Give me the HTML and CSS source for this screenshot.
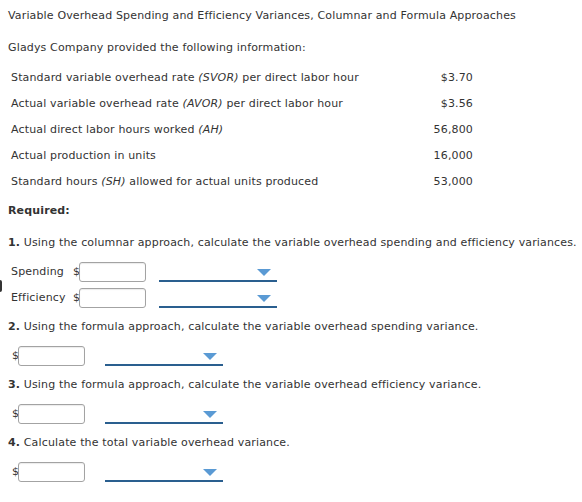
FILE: index.html
```html
<!DOCTYPE html>
<html>
<head>
<meta charset="utf-8">
<link rel="stylesheet" href="styles.css">
</head>
<body>
<div class="page">
  <div class="edge-mark"></div>
  <p class="title">Variable Overhead Spending and Efficiency Variances, Columnar and Formula Approaches</p>
  <p class="intro">Gladys Company provided the following information:</p>
  <div class="data">
    <div class="row"><span class="label">Standard variable overhead rate <i>(SVOR)</i> per direct labor hour</span><span class="val">$3.70</span></div>
    <div class="row"><span class="label">Actual variable overhead rate <i>(AVOR)</i> per direct labor hour</span><span class="val">$3.56</span></div>
    <div class="row"><span class="label">Actual direct labor hours worked <i>(AH)</i></span><span class="val">56,800</span></div>
    <div class="row"><span class="label">Actual production in units</span><span class="val">16,000</span></div>
    <div class="row"><span class="label">Standard hours <i>(SH)</i> allowed for actual units produced</span><span class="val">53,000</span></div>
  </div>
  <p class="required">Required:</p>
  <p class="q q1"><b>1.</b> Using the columnar approach, calculate the variable overhead spending and efficiency variances.</p>
  <div class="named">
    <div class="answer"><span class="name">Spending</span><span class="dollar">$</span><span class="box"></span><span class="select"><span class="arrow"></span></span></div>
    <div class="answer"><span class="name">Efficiency</span><span class="dollar">$</span><span class="box"></span><span class="select"><span class="arrow"></span></span></div>
  </div>
  <p class="q"><b>2.</b> Using the formula approach, calculate the variable overhead spending variance.</p>
  <div class="answer plain"><span class="dollar">$</span><span class="box"></span><span class="select"><span class="arrow"></span></span></div>
  <p class="q"><b>3.</b> Using the formula approach, calculate the variable overhead efficiency variance.</p>
  <div class="answer plain"><span class="dollar">$</span><span class="box"></span><span class="select"><span class="arrow"></span></span></div>
  <p class="q"><b>4.</b> Calculate the total variable overhead variance.</p>
  <div class="answer plain"><span class="dollar">$</span><span class="box"></span><span class="select"><span class="arrow"></span></span></div>
</div>
</body>
</html>
```
FILE: styles.css
```css
html, body {
  margin: 0;
  padding: 0;
  background: #fff;
}
.page {
  position: relative;
  padding: 9px 0 0 8px;
  font-family: "DejaVu Sans", Verdana, sans-serif;
  font-size: 11px;
  line-height: 14px;
  letter-spacing: 0.15px;
  color: #333;
  display: flex;
  flex-direction: column;
  align-items: flex-start;
}
p { margin: 0; }
i { font-style: italic; }
.title { margin-bottom: 18px; }
.intro { margin-bottom: 10px; }
.data {
  display: flex;
  flex-direction: column;
  margin-left: 3px;
  margin-bottom: 9px;
}
.row {
  display: flex;
  align-items: center;
  height: 26px;
}
.label { width: 400px; }
.val {
  width: 62px;
  text-align: right;
}
.required {
  font-weight: bold;
  margin-bottom: 18px;
}
.q { margin-bottom: 12px; }
.q1 { margin-bottom: 12px; }
.q b { font-weight: bold; }
.named {
  display: flex;
  flex-direction: column;
  gap: 6px;
  margin-left: 3px;
  margin-bottom: 12px;
}
.answer {
  display: flex;
  align-items: center;
  height: 20px;
}
.plain { margin-bottom: 12px; margin-left: 4px; }
.name { width: 62px; }
.dollar {
  width: 6px;
  font-size: 11px;
  letter-spacing: 0;
}
.box {
  box-sizing: border-box;
  width: 67px;
  height: 20px;
  border: 1px solid #a3a3a3;
  border-radius: 3px;
  background: #fff;
  box-shadow: inset 0 1px 1px rgba(0,0,0,0.08);
}
.select {
  position: relative;
  box-sizing: border-box;
  width: 118px;
  height: 20px;
  margin-left: 13px;
  border-bottom: 2px solid #2a5f8f;
  align-self: flex-end;
}
.plain .select { margin-left: 20px; }
.arrow {
  position: absolute;
  right: 6px;
  top: 7px;
  width: 0;
  height: 0;
  border-left: 7px solid transparent;
  border-right: 7px solid transparent;
  border-top: 7px solid #5a9ad4;
}
.edge-mark {
  position: absolute;
  left: -2px;
  top: 280px;
  width: 4px;
  height: 12px;
  border-radius: 2px;
  background: #333;
}
```
